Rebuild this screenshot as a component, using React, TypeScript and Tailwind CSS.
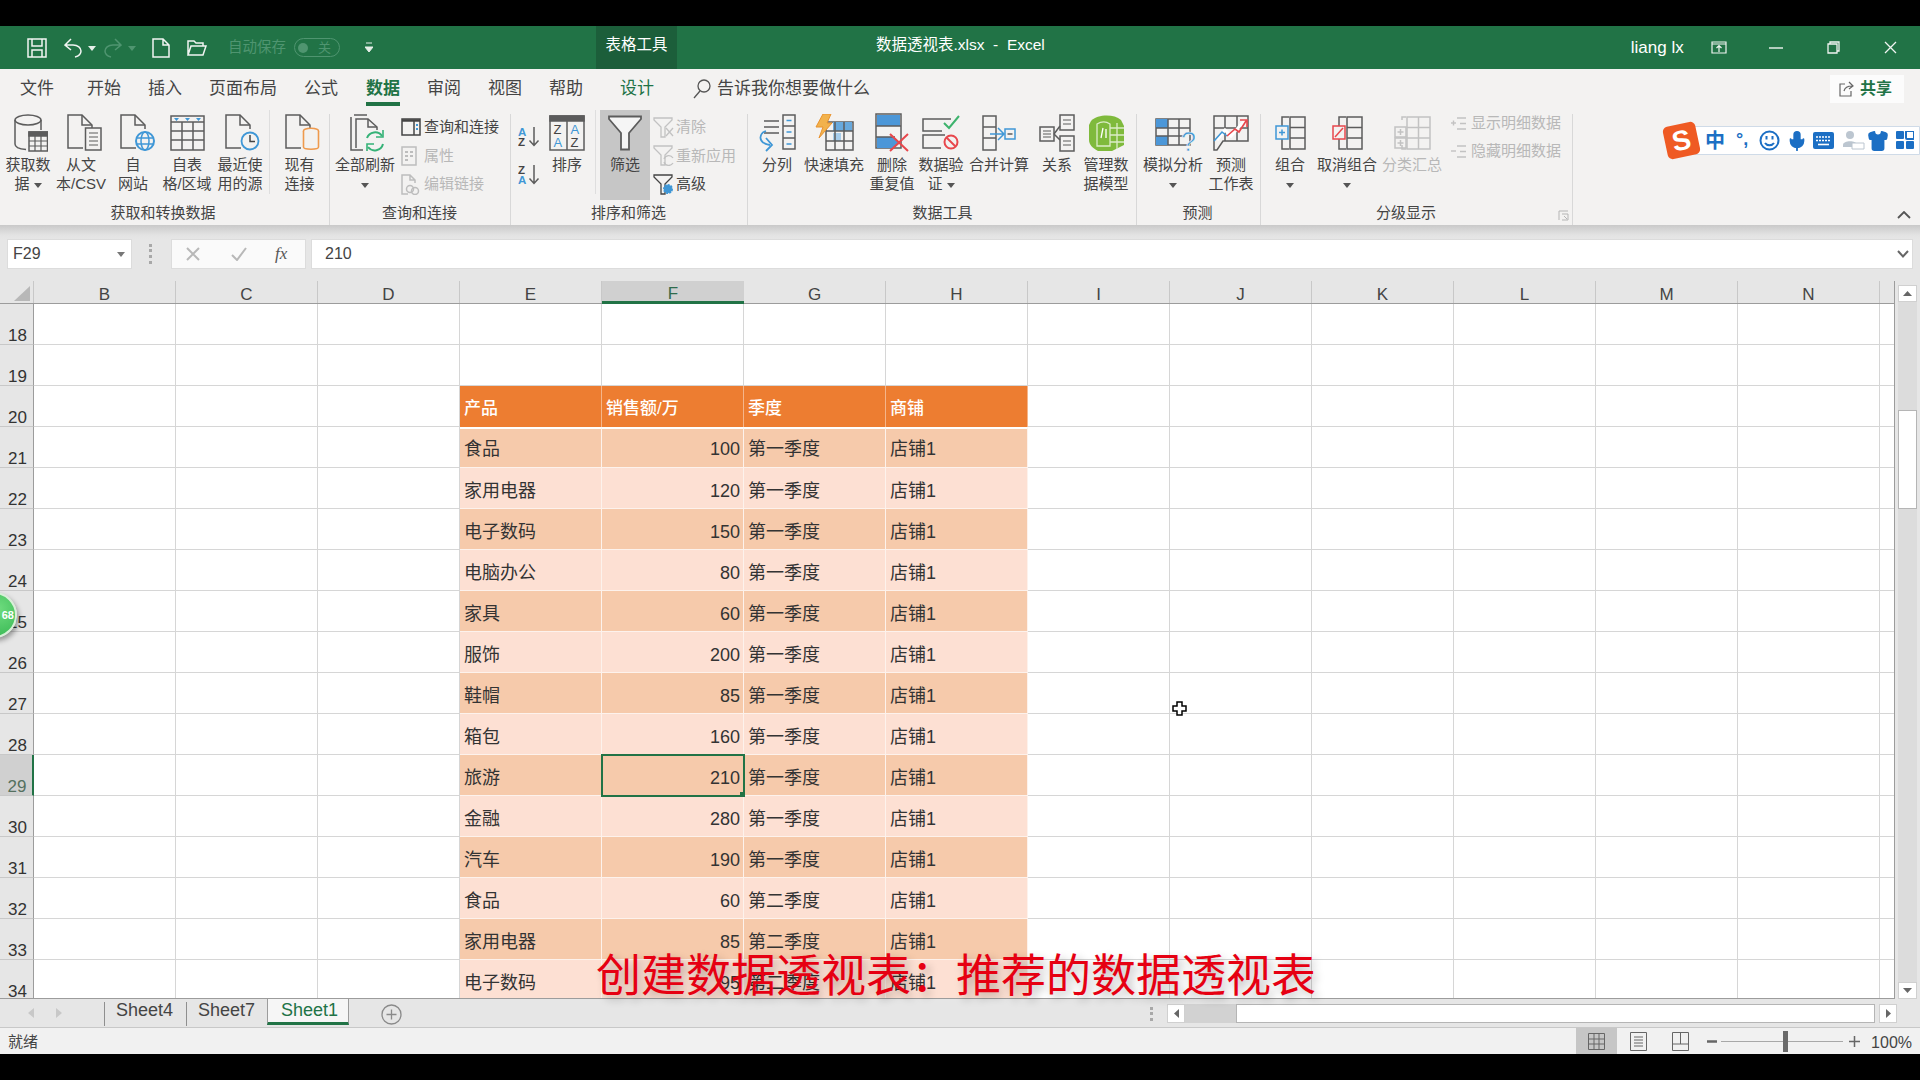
import type { ReactNode } from 'react';
import { Mic, Shirt } from 'lucide-react';

const columns = ['B', 'C', 'D', 'E', 'F', 'G', 'H', 'I', 'J', 'K', 'L', 'M', 'N'];

const tableRows: Record<number, [string, string, string]> = {
  21: ['食品', '100', '第一季度'],
  22: ['家用电器', '120', '第一季度'],
  23: ['电子数码', '150', '第一季度'],
  24: ['电脑办公', '80', '第一季度'],
  25: ['家具', '60', '第一季度'],
  26: ['服饰', '200', '第一季度'],
  27: ['鞋帽', '85', '第一季度'],
  28: ['箱包', '160', '第一季度'],
  29: ['旅游', '210', '第一季度'],
  30: ['金融', '280', '第一季度'],
  31: ['汽车', '190', '第一季度'],
  32: ['食品', '60', '第二季度'],
  33: ['家用电器', '85', '第二季度'],
  34: ['电子数码', '95', '第二季度'],
};

const rowNumbers = Array.from({ length: 17 }, (_, i) => 18 + i);

const ink = '#5c5c5c';
const blue = '#3f97d6';

function Ico({ w, h, children, className }: { w: number; h: number; children: ReactNode; className?: string }) {
  return (
    <svg width={w} height={h} viewBox={`0 0 ${w} ${h}`} fill="none" stroke={ink} strokeWidth="1.5" className={className}>
      {children}
    </svg>
  );
}

function Caret({ color = '#555' }: { color?: string }) {
  return (
    <svg width="8" height="5" viewBox="0 0 8 5" className="inline-block align-middle">
      <path d="M0 0H8L4 5Z" fill={color} />
    </svg>
  );
}

const Doc = () => (
  <>
    <path d="M16 34H1V1H15L25 11V15" />
    <path d="M15 1V11H25" />
  </>
);

const GetDataIcon = () => (
  <Ico w={34} h={38}>
    <ellipse cx="14" cy="6" rx="13" ry="5" />
    <path d="M1 6V30C1 33 6 35 12 35.5M27 6V16" />
    <rect x="15" y="18" width="18.5" height="19" fill="#f3f2f1" />
    <rect x="15" y="18" width="18.5" height="4" fill={ink} />
    <path d="M15 27H33M15 32H33M21 22V37M27 22V37" strokeWidth="1.2" />
  </Ico>
);

const TextDocIcon = () => (
  <Ico w={35} h={37}>
    <Doc />
    <rect x="18.5" y="14" width="15.5" height="22" fill="#f3f2f1" />
    <path d="M22 19H31M22 23H31M22 27H31M22 31H31" strokeWidth="1.2" />
  </Ico>
);

const WebIcon = () => (
  <Ico w={35} h={37}>
    <Doc />
    <circle cx="25" cy="27" r="9" fill="#f3f2f1" stroke={blue} strokeWidth="2" />
    <ellipse cx="25" cy="27" rx="4" ry="9" stroke={blue} />
    <path d="M16 24H34M16 30H34" stroke={blue} />
  </Ico>
);

const TableRangeIcon = () => (
  <Ico w={35} h={36}>
    <rect x="1" y="1" width="33" height="34" />
    <path d="M1 7H34M1 16H34M1 25H34M12 7V35M23 7V35" />
    <path d="M4 3H9L6.5 6ZM15 3H20L17.500 6ZM26 3H31L28.500 6Z" fill={blue} stroke="none" />
  </Ico>
);

const RecentIcon = () => (
  <Ico w={35} h={37}>
    <Doc />
    <circle cx="25" cy="27" r="8.500" fill="#f3f2f1" stroke={blue} strokeWidth="1.8" />
    <path d="M25 21V27.500H30" stroke="#444" />
  </Ico>
);

const ExistingIcon = () => (
  <Ico w={35} h={37}>
    <Doc />
    <g stroke="#ef9a4d" strokeWidth="1.6">
      <ellipse cx="26" cy="17" rx="7.500" ry="2.800" fill="#f3f2f1" />
      <path d="M18.500 17V33C18.500 36 33.500 36 33.500 33V17" fill="#f3f2f1" />
    </g>
  </Ico>
);

const RefreshIcon = () => (
  <Ico w={35} h={38}>
    <path d="M4 1H17" />
    <path d="M1 3V36H13" />
    <path d="M6 34V5H18L27 13V16" />
    <path d="M18 5V13H27" />
    <path d="M17 24A8.500 8.500 0 0 1 32 22M33 30A8.500 8.500 0 0 1 18 33" stroke="#35b277" strokeWidth="2" />
    <path d="M33 16V23H26M17 37V30H24" stroke="#35b277" strokeWidth="1.6" />
  </Ico>
);

const QueryPaneIcon = () => (
  <Ico w={20} h={18}>
    <rect x="1" y="1" width="18" height="16" stroke="#444" />
    <path d="M1 2.500H19" stroke="#444" strokeWidth="2.500" />
    <path d="M13 3V17" stroke="#444" />
    <path d="M16 6V8M16 10V12" stroke={blue} strokeWidth="2" />
  </Ico>
);

const PropsIcon = () => (
  <Ico w={16} h={20}>
    <rect x="1" y="1" width="14" height="18" stroke="#bdbdbd" />
    <path d="M4 6H7M4 10H7M9 6H12M9 10H12M4 14H7" stroke="#bdbdbd" strokeWidth="2" />
  </Ico>
);

const EditLinksIcon = () => (
  <Ico w={20} h={21}>
    <path d="M7 20H1V1H9L14 6V9M9 1V6H14" stroke="#bdbdbd" />
    <circle cx="9" cy="15" r="3.500" stroke="#bdbdbd" />
    <circle cx="14" cy="17" r="3.500" stroke="#bdbdbd" />
  </Ico>
);

const svgLetter = "Liberation Sans, sans-serif";

const SortAscIcon = ({ flip }: { flip?: boolean }) => (
  <Ico w={22} h={21}>
    <text x="0" y="9.500" fontFamily={svgLetter} fontSize="11.500" fontWeight="700" fill={flip ? '#444' : blue} stroke="none">{flip ? 'Z' : 'A'}</text>
    <text x="0" y="20" fontFamily={svgLetter} fontSize="11.500" fontWeight="700" fill={flip ? blue : '#444'} stroke="none">{flip ? 'A' : 'Z'}</text>
    <path d="M16 1V19M11.500 14.500L16 19.500L20.500 14.500" />
  </Ico>
);

const SortIcon = () => (
  <Ico w={36} h={36}>
    <rect x="1" y="1" width="34" height="34" />
    <rect x="1" y="1" width="34" height="5" fill={ink} />
    <path d="M18 6V35" />
    <text x="4.500" y="19" fontFamily={svgLetter} fontSize="13" fill="#444" stroke="none">Z</text>
    <text x="4.500" y="32" fontFamily={svgLetter} fontSize="13" fill={blue} stroke="none">A</text>
    <text x="21.500" y="19" fontFamily={svgLetter} fontSize="13" fill={blue} stroke="none">A</text>
    <text x="21.500" y="32" fontFamily={svgLetter} fontSize="13" fill="#444" stroke="none">Z</text>
  </Ico>
);

const FunnelIcon = () => (
  <Ico w={34} h={36}>
    <path d="M1 1.500H33V4L21 18V34.500H13V18L1 4Z" fill="#f5f5f5" strokeWidth="1.800" />
  </Ico>
);

function SmallFunnel({ color, children }: { color: string; children?: ReactNode }) {
  return (
    <svg width="22" height="21" viewBox="0 0 22 21" fill="none" stroke={color} strokeWidth="1.300">
      <path d="M1 1H19V3L12 10V20H8V10L1 3Z" fill="#f3f2f1" />
      {children}
    </svg>
  );
}

const SplitIcon = () => (
  <Ico w={38} h={38}>
    <path d="M6 7H21M6 13H21M6 19H21" />
    <rect x="25" y="1" width="12" height="34" />
    <path d="M25 12H37M25 24H37" />
    <path d="M28.500 6.500H33.500M28.500 18H33.500M28.500 30H33.500" stroke="#3f97d6" />
    <path d="M8 17C1 19 -1 29 12 31" stroke={blue} strokeWidth="1.800" />
    <path d="M8 24L14 31L8 37" stroke={blue} strokeWidth="1.800" />
  </Ico>
);

const FlashFillIcon = () => (
  <Ico w={39} h={37}>
    <rect x="11" y="8" width="27" height="28" />
    <rect x="18" y="8" width="19" height="9" fill="#68a9dd" stroke="none" />
    <rect x="18" y="19" width="8" height="8" fill="#a7cdeb" stroke="none" />
    <path d="M11 17H38M11 27H38M20 8V36M29 8V36" />
    <path d="M8 0H16L12 9H17L4 24L8 13H1Z" fill="#f2b24c" stroke="#e8922f" strokeWidth="1" />
  </Ico>
);

const RemoveDupIcon = () => (
  <Ico w={34} h={39}>
    <rect x="1" y="1" width="25" height="34" />
    <rect x="2" y="2" width="23" height="11" fill="#4c97d8" stroke="none" />
    <path d="M2 24H19L25 30L19 35H2Z" fill="#4c97d8" stroke="none" />
    <path d="M1 13H26M1 24H20" />
    <path d="M15 21L33 38M33 21L15 38" stroke="#e8474c" strokeWidth="2" />
  </Ico>
);

const ValidationIcon = () => (
  <Ico w={39} h={37}>
    <path d="M29 5H1V17H20M23 21H1V34H19" />
    <path d="M22 9L27 14L37 2" stroke="#3db36d" strokeWidth="2" />
    <circle cx="29" cy="28" r="6.500" stroke="#e8474c" strokeWidth="2" />
    <path d="M24.500 23.500L33.500 32.500" stroke="#e8474c" strokeWidth="2" />
  </Ico>
);

const ConsolidateIcon = () => (
  <Ico w={34} h={36}>
    <rect x="1" y="1" width="13" height="34" />
    <path d="M1 12H14M1 23H14" />
    <path d="M8 19H21M16 13L22 19L16 25" stroke={blue} strokeWidth="1.500" />
    <rect x="23" y="14" width="10" height="10" stroke={blue} />
    <path d="M25.500 19H30.500" stroke={ink} />
  </Ico>
);

const RelationsIcon = () => (
  <Ico w={36} h={38}>
    <rect x="1" y="13" width="14" height="14" />
    <path d="M4 17H12M4 20H12M4 23H12" strokeWidth="1.100" />
    <rect x="21" y="1" width="14" height="15" />
    <path d="M24 6H32M24 10H32" strokeWidth="1.100" />
    <rect x="21" y="22" width="14" height="15" />
    <path d="M24 27H32M24 31H32" strokeWidth="1.100" />
    <path d="M15 20L21 12M15 20L21 26" />
  </Ico>
);

const DataModelIcon = () => (
  <Ico w={37} h={38}>
    <path d="M3 7C10 0 26 0 33 6L36 12V31L24 37H10C4 34 1 30 1 26V11Z" fill="#7fba3c" stroke="none" />
    <path d="M9 10C14 7 19 8 22 10V32H9Z" stroke="#dcedc8" strokeWidth="1.300" />
    <path d="M22 14H36M22 21H36M22 28H36M29 9V35" stroke="#dcedc8" strokeWidth="1.300" />
    <path d="M13 24L15 14M18 24V15" stroke="#fff" strokeWidth="1.300" />
  </Ico>
);

const WhatIfIcon = () => (
  <Ico w={40} h={38}>
    <rect x="1" y="5" width="34" height="26" />
    <rect x="1" y="5" width="12" height="9" fill="#4c97d8" stroke="none" />
    <rect x="1" y="22" width="12" height="9" fill="#4c97d8" stroke="none" />
    <path d="M1 14H35M1 22H30M13 5V31M24 5V31" />
    <text x="26" y="37" fontFamily={svgLetter} fontSize="27" fill={blue} stroke="#f3f2f1" strokeWidth=".6">?</text>
  </Ico>
);

const ForecastIcon = () => (
  <Ico w={36} h={36}>
    <path d="M1 26V1H35V26H10L4 35H1ZM1 13H35M12 1V26M24 1V26" />
    <path d="M4 25L12 15L18 21L32 5" stroke="#fff" strokeWidth="3" />
    <path d="M1 26L9 17L14 21" stroke={blue} strokeWidth="1.600" />
    <path d="M14 21L22 14L26 17L33 6M27 5H34V12" stroke="#e8474c" strokeWidth="1.600" />
  </Ico>
);

function GroupColumn({ color = ink, box, sign }: { color?: string; box: string; sign: 'plus' | 'slash' }) {
  return (
    <svg width="31" height="34" viewBox="0 0 31 34" fill="none" stroke={color} strokeWidth="1.500">
      <path d="M14 1H7V10M7 23V33H14" />
      <rect x="15" y="1" width="15" height="32" />
      <path d="M15 11.500H30M15 22H30" />
      <rect x="1" y="10" width="12" height="13" fill="#f3f2f1" stroke={box} />
      {sign === 'plus' ? <path d="M4 16.500H10M7 13.500V19.500" stroke={box} /> : <path d="M3 21L11 12" stroke={box} />}
    </svg>
  );
}

const SubtotalIcon = () => (
  <svg width="37" height="34" viewBox="0 0 37 34" fill="none" stroke="#c2c2c2" strokeWidth="1.500">
    <path d="M12 1H8V4M8 29V33H12" />
    <rect x="13" y="1" width="23" height="32" />
    <path d="M13 11.500H36M13 22H36M24.500 1V33" />
    <rect x="1" y="11" width="11" height="10" />
    <rect x="1" y="22" width="11" height="10" />
    <path d="M3.500 16H9.500M6.500 13V19M3.500 27H9.500M6.500 24V30" />
  </svg>
);

function DetailIcon({ plus }: { plus?: boolean }) {
  return (
    <svg width="19" height="15" viewBox="0 0 19 15" fill="none" stroke="#c2c2c2" strokeWidth="1.400">
      <path d="M2 7H7" />
      {plus && <path d="M4.500 4.500V9.500" />}
      <path d="M8 2H17M11 7.500H17M8 13H17" />
    </svg>
  );
}

function BigButton({ className, icon, iconClass = '', lines, muted }: { className: string; icon: ReactNode; iconClass?: string; lines: ReactNode[]; muted?: boolean }) {
  return (
    <div className={`${className} h-[90px] flex flex-col items-center shrink-0`}>
      <div className={`h-[45px] flex items-center justify-center shrink-0 ${iconClass}`}>{icon}</div>
      {lines.map((line, i) => (
        <div key={i} className={`h-[19px] leading-[19px] whitespace-nowrap text-[15px] ${muted ? 'text-[#b8b8b8]' : 'text-[#444]'}`}>
          {line}
        </div>
      ))}
    </div>
  );
}

function SmallButton({ icon, label, muted, iconBox = 'w-[23px]', rowH = 'h-[28.5px]' }: { icon: ReactNode; label: string; muted?: boolean; iconBox?: string; rowH?: string }) {
  return (
    <div className={`flex items-center ${rowH}`}>
      <div className={`${iconBox} shrink-0 flex items-center`}>{icon}</div>
      <span className={`text-[15px] whitespace-nowrap ${muted ? 'text-[#b8b8b8]' : 'text-[#444]'}`}>{label}</span>
    </div>
  );
}

function RibbonGroup({ className, label, labelClass = '', children }: { className: string; label: string; labelClass?: string; children: ReactNode }) {
  return (
    <div className={`${className} shrink-0 relative flex flex-col`}>
      <div className="absolute right-0 top-[4px] h-[111px] w-px bg-[#d8d8d8]" />
      <div className="h-[93px] flex shrink-0">{children}</div>
      <div className={`h-[20px] leading-[20px] text-center text-[15px] text-[#444] ${labelClass}`}>{label}</div>
    </div>
  );
}

function TitleBar() {
  return (
    <div className="h-[43px] bg-[#217346] flex items-center text-white shrink-0">
      <svg width="20" height="20" viewBox="0 0 20 20" fill="none" stroke="#f1f5f2" strokeWidth="1.500" className="ml-[27px]">
        <path d="M1 1H19V19H1ZM5 1V8H15V1M5 19V12H15V19" />
      </svg>
      <svg width="18" height="20" viewBox="0 0 18 20" fill="none" stroke="#f1f5f2" strokeWidth="1.500" className="ml-[17px]">
        <path d="M7 1L1 7L7 12M1 7H9C14 7 17 10 17 13C17 16 15 18 11 19" />
      </svg>
      <div className="ml-[6px]"><Caret color="#e6efe9" /></div>
      <svg width="18" height="20" viewBox="0 0 18 20" fill="none" stroke="#4f9570" strokeWidth="1.500" className="ml-[8px]">
        <path d="M11 1L17 7L11 12M17 7H9C4 7 1 10 1 13C1 16 3 18 7 19" />
      </svg>
      <div className="ml-[6px]"><Caret color="#4f9570" /></div>
      <svg width="18" height="20" viewBox="0 0 18 20" fill="none" stroke="#f1f5f2" strokeWidth="1.500" className="ml-[16px]">
        <path d="M1 1H11L17 7V19H1ZM11 1V7H17" />
      </svg>
      <svg width="20" height="16" viewBox="0 0 20 16" fill="none" stroke="#f1f5f2" strokeWidth="1.500" className="ml-[17px]">
        <path d="M1 15V1H7L9 3H16V6M1 15H16L19 6H4L1 15Z" />
      </svg>
      <span className="ml-[21px] text-[14.500px] text-[#4f9570]">自动保存</span>
      <div className="ml-[8px] w-[46px] h-[19px] rounded-full border border-[#4f9570] flex items-center pl-[3px]">
        <div className="w-[10px] h-[10px] rounded-full bg-[#4f9570]" />
        <span className="ml-[10px] text-[13px] text-[#4f9570] leading-none">关</span>
      </div>
      <svg width="8" height="12" viewBox="0 0 8 12" className="ml-[25px]">
        <path d="M1 1H7M0 5H8L4 10Z" stroke="#e6efe9" fill="#e6efe9" strokeWidth="1" />
      </svg>
      <div className="ml-[223px] w-[81px] h-full bg-[#1c5e3a] flex items-center justify-center pb-[5px] text-[15.500px]">表格工具</div>
      <div className="ml-[199px] text-[15.500px] pb-[5px] whitespace-pre">数据透视表.xlsx  -  Excel</div>
      <div className="ml-[586px] text-[17px]">liang lx</div>
      <svg width="16" height="13" viewBox="0 0 16 13" fill="none" stroke="#f1f5f2" strokeWidth="1.200" className="ml-[27px]">
        <path d="M1 1H15V12H1ZM1 3H15M8 11V5M5.500 7L8 4.500L10.500 7" />
      </svg>
      <svg width="14" height="2" viewBox="0 0 14 2" stroke="#f1f5f2" strokeWidth="1.400" className="ml-[42px]">
        <path d="M0 1H14" />
      </svg>
      <svg width="13" height="13" viewBox="0 0 13 13" fill="none" stroke="#f1f5f2" strokeWidth="1.300" className="ml-[44px]">
        <path d="M1 3H10V12H1ZM3 3V1H12V10H10" />
      </svg>
      <svg width="13" height="13" viewBox="0 0 13 13" fill="none" stroke="#f1f5f2" strokeWidth="1.300" className="ml-[44px]">
        <path d="M1 1L12 12M12 1L1 12" />
      </svg>
    </div>
  );
}

function TabRow() {
  return (
    <div className="h-[39px] bg-[#f3f2f1] flex items-center text-[17px] text-[#444] shrink-0 relative">
      <span className="ml-[20px]">文件</span>
      <span className="ml-[33px]">开始</span>
      <span className="ml-[27px]">插入</span>
      <span className="ml-[27px]">页面布局</span>
      <span className="ml-[27px]">公式</span>
      <span className="ml-[28px] font-bold text-[#217346] relative">
        数据
        <span className="absolute left-0 right-0 top-[26px] h-[4px] bg-[#217346]" />
      </span>
      <span className="ml-[27px]">审阅</span>
      <span className="ml-[27px]">视图</span>
      <span className="ml-[27px]">帮助</span>
      <span className="ml-[37px] text-[#217346]">设计</span>
      <svg width="18" height="20" viewBox="0 0 18 20" fill="none" stroke="#555" strokeWidth="1.300" className="ml-[39px]">
        <circle cx="11" cy="7" r="6" />
        <path d="M7 12L1 19" />
      </svg>
      <span className="ml-[6px]">告诉我你想要做什么</span>
      <div className="ml-auto mr-[16px] w-[74px] h-[28px] bg-[#fcfcfc] flex items-center pl-[9px] gap-[6px] text-[#217346] font-bold text-[16px]">
        <svg width="15" height="16" viewBox="0 0 15 16" fill="none" stroke="#666" strokeWidth="1.200">
          <path d="M6 3H1V15H12V10M5 10C6 6 9 5 13 5M10 1L14 5L10 8" />
        </svg>
        共享
      </div>
    </div>
  );
}

function Ribbon() {
  return (
    <div className="h-[117px] bg-[#f3f2f1] flex pt-[2px] shrink-0 relative">
      <RibbonGroup className="w-[330px]" label="获取和转换数据" labelClass="pr-[4px]">
        <BigButton className="w-[56px]" iconClass="pl-[6px]" icon={<GetDataIcon />} lines={['获取数', <>据 <Caret /></>]} />
        <BigButton className="w-[50px]" iconClass="pl-[6px]" icon={<TextDocIcon />} lines={['从文', '本/CSV']} />
        <BigButton className="w-[54px]" iconClass="pl-[8px]" icon={<WebIcon />} lines={['自', '网站']} />
        <BigButton className="w-[54px]" icon={<TableRangeIcon />} lines={['自表', '格/区域']} />
        <BigButton className="w-[52px]" iconClass="pl-[4px]" icon={<RecentIcon />} lines={['最近使', '用的源']} />
        <div className="ml-[3px] w-px h-[84px] bg-[#dedede]" />
        <BigButton className="w-[59px]" iconClass="pl-[6px]" icon={<ExistingIcon />} lines={['现有', '连接']} />
      </RibbonGroup>

      <RibbonGroup className="w-[181px]" label="查询和连接" labelClass="pr-[2px]">
        <BigButton className="w-[70px]" iconClass="pl-[5px]" icon={<RefreshIcon />} lines={['全部刷新', <Caret />]} />
        <div className="ml-px pt-[3px] flex flex-col">
          <SmallButton icon={<QueryPaneIcon />} label="查询和连接" />
          <SmallButton icon={<PropsIcon />} label="属性" muted />
          <SmallButton icon={<EditLinksIcon />} label="编辑链接" muted />
        </div>
      </RibbonGroup>

      <RibbonGroup className="w-[237px]" label="排序和筛选" labelClass="pr-[2px]">
        <div className="ml-[7px] w-[22px] pt-[16px] flex flex-col gap-[17px]">
          <SortAscIcon />
          <SortAscIcon flip />
        </div>
        <div className="ml-[9px]">
          <BigButton className="w-[36px]" icon={<SortIcon />} lines={['排序']} />
        </div>
        <div className="ml-[10px] w-px h-[84px] bg-[#dedede]" />
        <div className="ml-[4px] w-[50px] h-[90px] bg-[#c6c6c6]">
          <BigButton className="w-[50px]" icon={<FunnelIcon />} lines={['筛选']} />
        </div>
        <div className="ml-[3px] pt-[3px] flex flex-col">
          <SmallButton
            icon={<SmallFunnel color="#c2c2c2"><path d="M13 11L20 19M20 11L13 19" /></SmallFunnel>}
            label="清除"
            muted
          />
          <SmallButton
            icon={<SmallFunnel color="#c2c2c2"><path d="M20 13A5 5 0 0 0 11 14M11 17A5 5 0 0 0 20 18" /></SmallFunnel>}
            label="重新应用"
            muted
          />
          <SmallButton
            icon={<SmallFunnel color="#444"><circle cx="15" cy="15" r="4" fill={blue} stroke={blue} strokeWidth="2" strokeDasharray="2 1" /></SmallFunnel>}
            label="高级"
          />
        </div>
      </RibbonGroup>

      <RibbonGroup className="w-[389px]" label="数据工具">
        <BigButton className="w-[58px]" icon={<SplitIcon />} lines={['分列']} />
        <BigButton className="w-[56px]" icon={<FlashFillIcon />} lines={['快速填充']} />
        <BigButton className="w-[60px]" icon={<RemoveDupIcon />} lines={['删除', '重复值']} />
        <BigButton className="w-[38px]" icon={<ValidationIcon />} lines={['数据验', <>证 <Caret /></>]} />
        <BigButton className="w-[78px]" icon={<ConsolidateIcon />} lines={['合并计算']} />
        <BigButton className="w-[38px]" icon={<RelationsIcon />} lines={['关系']} />
        <BigButton className="w-[60px]" icon={<DataModelIcon />} lines={['管理数', '据模型']} />
      </RibbonGroup>

      <RibbonGroup className="w-[124px]" label="预测" labelClass="pr-[3px]">
        <BigButton className="w-[72px]" iconClass="pl-[4px]" icon={<WhatIfIcon />} lines={['模拟分析', <Caret />]} />
        <BigButton className="w-[44px]" icon={<ForecastIcon />} lines={['预测', '工作表']} />
      </RibbonGroup>

      <RibbonGroup className="w-[312px]" label="分级显示" labelClass="pr-[22px]">
        <BigButton className="w-[58px]" icon={<GroupColumn box="#3f97d6" sign="plus" />} lines={['组合', <Caret />]} />
        <BigButton className="w-[56px]" icon={<GroupColumn box="#e8474c" sign="slash" />} lines={['取消组合', <Caret />]} />
        <BigButton className="w-[74px]" icon={<SubtotalIcon />} lines={['分类汇总']} muted />
        <div className="-mt-px flex flex-col">
          <SmallButton icon={<DetailIcon plus />} label="显示明细数据" muted iconBox="w-[22px]" rowH="h-[28px]" />
          <SmallButton icon={<DetailIcon />} label="隐藏明细数据" muted iconBox="w-[22px]" rowH="h-[28px]" />
        </div>
        <svg width="11" height="11" viewBox="0 0 11 11" fill="none" stroke="#b5b5b5" className="absolute right-[4px] bottom-[4px]">
          <path d="M1 10V1H10M4 4H10V10H4M6 6L9 9" />
        </svg>
      </RibbonGroup>

      <svg width="14" height="8" viewBox="0 0 14 8" fill="none" stroke="#555" strokeWidth="1.800" className="absolute left-[1897px] top-[103px]">
        <path d="M1 7L7 1L13 7" />
      </svg>
    </div>
  );
}

function FormulaBar() {
  return (
    <div className="h-[56px] shrink-0 bg-[linear-gradient(#c9c9c9,#e3e3e3_10px,#e6e6e6_14px)] pt-[14px] flex items-start text-[#444]">
      <div className="ml-[7px] w-[125px] h-[30px] bg-white flex items-center justify-between pl-[5px] pr-[6px] text-[16px] border border-[#dcdcdc]">
        F29
        <Caret color="#777" />
      </div>
      <div className="ml-[17px] w-[4px] h-[20px] mt-[5px] border-l-[3px] border-dotted border-[#a8a8a8]" />
      <div className="ml-[18px] w-[135px] h-[30px] bg-[#fafafa] border border-[#dcdcdc] flex items-center text-[#b0b0b0]">
        <svg width="14" height="14" viewBox="0 0 14 14" fill="none" stroke="#b8b8b8" strokeWidth="2" className="ml-[14px]">
          <path d="M1 1L13 13M13 1L1 13" />
        </svg>
        <svg width="16" height="14" viewBox="0 0 16 14" fill="none" stroke="#b8b8b8" strokeWidth="2" className="ml-[31px]">
          <path d="M1 8L6 13L15 1" />
        </svg>
        <span className="ml-[28px] italic text-[#555] text-[17px] [font-family:'Liberation_Serif',serif]">fx</span>
      </div>
      <div className="ml-[5px] w-[1602px] h-[30px] bg-white border border-[#dcdcdc] flex items-center justify-between pl-[13px] pr-[3px] text-[16px]">
        210
        <svg width="12" height="8" viewBox="0 0 12 8" fill="none" stroke="#666" strokeWidth="2">
          <path d="M1 1L6 6.500L11 1" />
        </svg>
      </div>
    </div>
  );
}

function ColumnHeader() {
  return (
    <div className="h-[23px] flex shrink-0 bg-[#e6e6e6] border-b border-[#9c9c9c] text-[#444]">
      <div className="w-[34px] shrink-0 flex items-end justify-end pr-[3px] pb-[2px] border-r border-[#c8c8c8]">
        <svg width="16" height="15" viewBox="0 0 16 15">
          <path d="M16 0V15H0Z" fill="#b8b8b8" />
        </svg>
      </div>
      {columns.map((c) =>
        c === 'F' ? (
          <div key={c} className="w-[142px] shrink-0 flex items-center justify-center pt-[5px] text-[17px] bg-[#d0d0d0] border-b-[3px] border-[#217346] text-[#2f6b4c] h-[23px]">
            {c}
          </div>
        ) : (
          <div key={c} className="w-[142px] shrink-0 flex items-center justify-center pt-[5px] text-[17px] border-r border-[#c8c8c8]">
            {c}
          </div>
        ),
      )}
      <div className="flex-1" />
    </div>
  );
}

function BlankCells({ names }: { names: string[] }) {
  return (
    <>
      {names.map((n) => (
        <div key={n} className="w-[142px] h-full shrink-0 border-r border-b border-[#d6d6d6]" />
      ))}
    </>
  );
}

function TableCells({ n }: { n: number }) {
  const row = tableRows[n];
  const tone = n % 2 === 1 ? 'bg-[#f6caab]' : 'bg-[#fde0d3]';
  const edge = n === 21 ? 'border-t-2 border-t-white' : '';
  const cell = `w-[142px] h-full shrink-0 border-r border-b border-[#fdf2ec] flex items-center text-[18px] text-[#333] ${n === 21 ? 'pt-[3px]' : 'pt-[6px]'} ${tone} ${edge}`;
  const selected = n === 29;
  return (
    <>
      <div className={`${cell} pl-[4px]`}>{row[0]}</div>
      <div className={`${cell} justify-end pr-[3px] text-[17px] relative ${selected ? 'outline-2 -outline-offset-1 outline-[#217346] z-10' : ''}`}>
        {row[1]}
        {selected && <span className="absolute -right-[2px] -bottom-[2px] w-[5px] h-[5px] bg-[#217346]" />}
      </div>
      <div className={`${cell} pl-[4px]`}>{row[2]}</div>
      <div className={`${cell} pl-[4px]`}>店铺1</div>
    </>
  );
}

function HeaderCells() {
  const cell = 'w-[142px] h-full shrink-0 bg-[#ed7d31] border-r border-[#f5b58a] flex items-center pl-[4px] pt-[5px] text-[17px] font-medium text-white';
  return (
    <>
      <div className={cell}>产品</div>
      <div className={cell}>销售额/万</div>
      <div className={cell}>季度</div>
      <div className={cell}>商铺</div>
    </>
  );
}

function Row({ n }: { n: number }) {
  const active = n === 29;
  return (
    <div className="flex h-[41px] shrink-0">
      <div
        className={`w-[34px] h-full shrink-0 flex items-end justify-center pl-[2px] leading-[17px] text-[17px] border-b border-[#c8c8c8] border-r ${
          active ? 'bg-[#d0d0d0] text-[#55705f] border-r-2 border-r-[#217346]' : 'bg-[#e6e6e6] text-[#333] border-r-[#9c9c9c]'
        }`}
      >
        {n}
      </div>
      <BlankCells names={['B', 'C', 'D']} />
      {n === 20 ? <HeaderCells /> : tableRows[n] ? <TableCells n={n} /> : <BlankCells names={['E', 'F', 'G', 'H']} />}
      <BlankCells names={['I', 'J', 'K', 'L', 'M', 'N']} />
      <div className="flex-1 h-full border-b border-[#d6d6d6]" />
    </div>
  );
}

function VScroll() {
  return (
    <div className="w-[25px] shrink-0 bg-[#e6e6e6] pl-[3px] pr-[3px] pt-[4px] flex flex-col">
      <div className="h-[17px] bg-white border border-[#d0d0d0] flex items-center justify-center shrink-0">
        <svg width="9" height="5" viewBox="0 0 9 5"><path d="M0 5H9L4.500 0Z" fill="#666" /></svg>
      </div>
      <div className="flex-1 bg-[#dcdcdc] pt-[108px]">
        <div className="h-[99px] bg-white border border-[#b5b5b5]" />
      </div>
      <div className="h-[17px] bg-white border border-[#d0d0d0] flex items-center justify-center shrink-0">
        <svg width="9" height="5" viewBox="0 0 9 5"><path d="M0 0H9L4.500 5Z" fill="#666" /></svg>
      </div>
    </div>
  );
}

function SheetBar() {
  return (
    <div className="h-[29px] shrink-0 bg-[#e6e6e6] border-b border-[#c8c8c8] flex items-start text-[18px] text-[#444]">
      <svg width="6" height="10" viewBox="0 0 6 10" className="ml-[28px] mt-[9px]"><path d="M6 0V10L0 5Z" fill="#c8c8c8" /></svg>
      <svg width="6" height="10" viewBox="0 0 6 10" className="ml-[22px] mt-[9px]"><path d="M0 0V10L6 5Z" fill="#c8c8c8" /></svg>
      <div className="ml-[42px] w-px h-[24px] bg-[#8f8f8f] mt-[3px]" />
      <div className="ml-[11px] w-[70px] leading-[22px]">Sheet4</div>
      <div className="w-px h-[24px] bg-[#8f8f8f] mt-[3px]" />
      <div className="ml-[11px] w-[69px] leading-[22px]">Sheet7</div>
      <div className="w-[82px] h-[26px] bg-[#f6f6f6] border-x border-[#9c9c9c] border-b-[3px] border-b-[#217346] text-[#217346] leading-[22px] pl-[13px]">Sheet1</div>
      <svg width="21" height="21" viewBox="0 0 21 21" fill="none" stroke="#8a8a8a" strokeWidth="1.300" className="ml-[32px] mt-[5px]">
        <circle cx="10.500" cy="10.500" r="9.500" />
        <path d="M10.500 5.500V15.500M5.500 10.500H15.500" />
      </svg>
      <div className="ml-auto mt-[8px] w-[4px] h-[14px] border-l-[3px] border-dotted border-[#a8a8a8]" />
      <div className="ml-[13px] mt-[5px] w-[18px] h-[19px] bg-white border border-[#d0d0d0] flex items-center justify-center">
        <svg width="5" height="9" viewBox="0 0 5 9"><path d="M5 0V9L0 4.500Z" fill="#666" /></svg>
      </div>
      <div className="mt-[5px] w-[51px] h-[19px] bg-[#d2d2d2]" />
      <div className="mt-[5px] w-[639px] h-[19px] bg-white border border-[#b5b5b5]" />
      <div className="ml-[4px] mt-[5px] w-[18px] h-[19px] bg-white border border-[#d0d0d0] flex items-center justify-center">
        <svg width="5" height="9" viewBox="0 0 5 9"><path d="M0 0V9L5 4.500Z" fill="#666" /></svg>
      </div>
      <div className="w-[23px]" />
    </div>
  );
}

function StatusBar() {
  return (
    <div className="h-[26px] shrink-0 bg-[#f1f1f1] flex items-center text-[#444] text-[15px]">
      <span className="ml-[8px] pt-[3px]">就绪</span>
      <div className="ml-auto w-[41px] h-full bg-[#c6c6c6] flex items-center justify-center">
        <svg width="17" height="17" viewBox="0 0 17 17" fill="none" stroke="#666">
          <path d="M.5.500H16.500V16.500H.5ZM.5 6H16.500M.5 11H16.500M6 .5V16.500M11 .5V16.500" />
        </svg>
      </div>
      <svg width="17" height="19" viewBox="0 0 17 19" fill="none" stroke="#666" className="ml-[13px]">
        <path d="M.5.500H16.500V18.500H.5ZM4 5H13M4 8H13M4 11H13M4 14H13" />
      </svg>
      <svg width="17" height="19" viewBox="0 0 17 19" fill="none" stroke="#666" className="ml-[25px]">
        <path d="M.5.500H16.500V18.500H.5ZM.5 12H16.500M8.500 .5V12" />
      </svg>
      <svg width="10" height="3" viewBox="0 0 10 3" className="ml-[18px]"><path d="M0 1.500H10" stroke="#666" strokeWidth="2.500" /></svg>
      <div className="ml-[4px] w-[122px] h-px bg-[#a8a8a8] relative">
        <div className="absolute left-[62px] -top-[10px] w-[5px] h-[21px] bg-[#6a6a6a]" />
      </div>
      <svg width="11" height="11" viewBox="0 0 11 11" className="ml-[6px]"><path d="M5.500 0V11M0 5.500H11" stroke="#666" strokeWidth="1.500" /></svg>
      <span className="ml-[11px] mr-[8px] pt-[3px] text-[16px]">100%</span>
    </div>
  );
}

function ImeBar() {
  const tone = 'text-[#1c6fc4]';
  return (
    <div className="absolute left-[1665px] top-[122px] w-[255px] h-[36px] flex items-center">
      <div className="absolute left-[25px] right-0 top-[4px] h-[29px] bg-white border border-[#cfdbe8] rounded-l-[3px]" />
      <div className="relative w-[33px] h-[33px] rounded-[5px] -rotate-12 bg-[#ef5a23] flex items-center justify-center text-white text-[28px] font-bold [font-family:'Liberation_Sans',sans-serif]">
        S
      </div>
      <span className={`absolute left-[40px] top-[4px] text-[20px] font-bold ${tone}`}>中</span>
      <span className={`absolute left-[71px] top-[4px] text-[18px] font-bold ${tone}`}>°,</span>
      <svg width="21" height="21" viewBox="0 0 21 21" fill="none" stroke="#1c6fc4" strokeWidth="2" className="absolute left-[94px] top-[8px]">
        <circle cx="10.500" cy="10.500" r="9" />
        <path d="M7.500 6V9.500M13.500 6V9.500M6 13C8 16 13 16 15 13" />
      </svg>
      <Mic size={22} className="absolute left-[121px] top-[8px] text-[#1c6fc4]" fill="#1c6fc4" strokeWidth={2} />
      <svg width="21" height="17" viewBox="0 0 21 17" className="absolute left-[148px] top-[10px]">
        <rect width="21" height="17" rx="2" fill="#1c6fc4" />
        <path d="M3 5H18M3 8.500H18" stroke="#fff" strokeWidth="1.600" strokeDasharray="2 1" />
        <path d="M5 12.500H16" stroke="#fff" strokeWidth="1.600" />
      </svg>
      <svg width="22" height="20" viewBox="0 0 22 20" fill="#bcc6d0" className="absolute left-[178px] top-[9px]">
        <circle cx="7" cy="4" r="4" />
        <path d="M0 14C0 9 14 9 14 14V16H0Z" />
        <path d="M9 12H21V18H9Z" fill="#fff" stroke="#bcc6d0" />
      </svg>
      <Shirt size={22} className="absolute left-[202px] top-[8px] text-[#1c6fc4]" fill="#1c6fc4" />
      <svg width="18" height="18" viewBox="0 0 18 18" fill="#1c6fc4" className="absolute left-[231px] top-[9px]">
        <rect width="8" height="8" rx="1" />
        <rect x="10" width="8" height="8" rx="1" fill="none" stroke="#1c6fc4" strokeWidth="2" />
        <rect y="10" width="8" height="8" rx="1" />
        <rect x="10" y="10" width="8" height="8" rx="1" />
      </svg>
    </div>
  );
}

export default function App() {
  return (
    <div className="relative w-[1920px] h-[1080px] overflow-hidden bg-black flex flex-col [font-family:'Liberation_Sans','Noto_Sans_CJK_SC',sans-serif]">
      <div className="h-[26px] shrink-0" />
      <TitleBar />
      <TabRow />
      <Ribbon />
      <FormulaBar />
      <div className="h-[718px] shrink-0 flex bg-white">
        <div className="w-[1895px] shrink-0 flex flex-col border-r border-[#9c9c9c]">
          <ColumnHeader />
          <div className="h-[695px] overflow-hidden flex flex-col border-b border-[#9c9c9c]">
            {rowNumbers.map((n) => (
              <Row key={n} n={n} />
            ))}
          </div>
        </div>
        <VScroll />
      </div>
      <SheetBar />
      <StatusBar />
      <div className="flex-1" />

      <ImeBar />

      {/* floating speed badge at the left edge */}
      <div className="absolute -left-[29px] top-[592px] w-[46px] h-[46px] rounded-full border-2 border-[#d8efd8] bg-[radial-gradient(circle_at_60%_35%,#6fdc7f,#2fb24c)] shadow-[2px_3px_5px_rgba(0,0,0,.35)] flex items-center justify-end pr-[1px] text-[11px] font-bold text-white">
        68
      </div>

      {/* cell cursor */}
      <svg width="15" height="15" viewBox="0 0 15 15" className="absolute left-[1172px] top-[701px]">
        <path d="M5 1H10V5H14V10H10V14H5V10H1V5H5Z" fill="#fff" stroke="#000" strokeWidth="1.500" />
      </svg>

      <div className="absolute left-[596px] top-[945px] text-[45px] leading-[64px] whitespace-nowrap text-[#e60012] [text-shadow:4px_4px_9px_rgba(0,0,0,.28)]">
        创建数据透视表：推荐的数据透视表
      </div>
    </div>
  );
}
